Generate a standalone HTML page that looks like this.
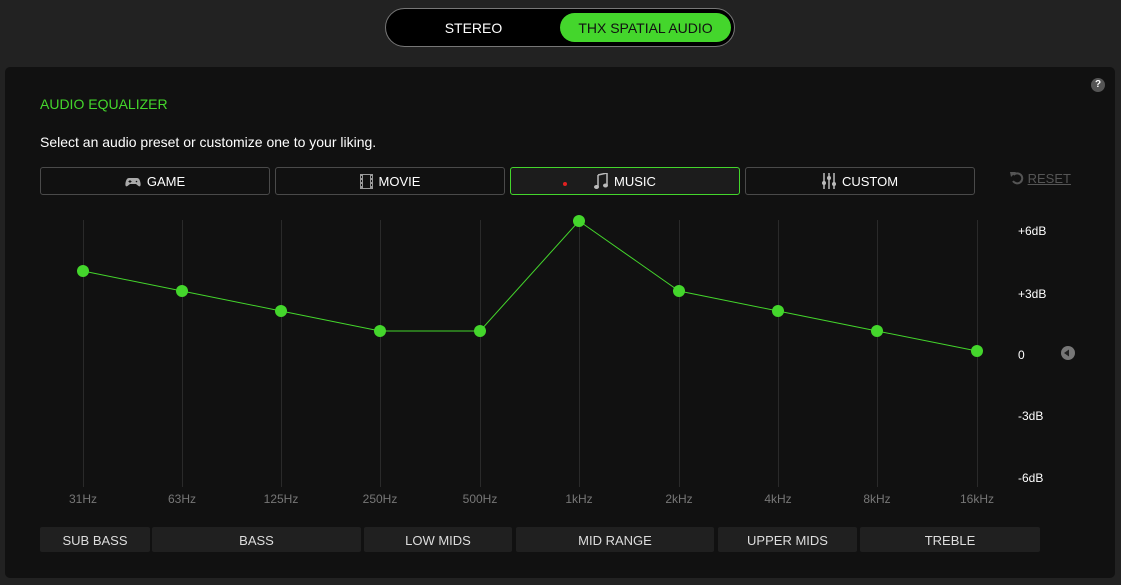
<!DOCTYPE html>
<html><head><style>
body{margin:0;width:1121px;height:585px;background:#222;font-family:"Liberation Sans",sans-serif;position:relative;overflow:hidden;color:#eee}
.a{position:absolute}
.tog{left:385px;top:8px;width:348px;height:37px;border:1px solid #777;border-radius:20px;background:#000}
.tog .s{left:0;width:175px;top:1px;line-height:37px;text-align:center;font-size:14px;color:#fff}
.tog .g{left:174px;top:4px;width:171px;height:29px;border-radius:15px;background:#44d62c;color:#111;text-align:center;line-height:31px;font-size:14px}
.panel{left:5px;top:67px;width:1110px;height:511px;background:#111;border-radius:5px}
.pb{top:167px;height:28px;border:1px solid #4a4a4a;border-radius:3px;box-sizing:border-box;width:230px;line-height:27px;text-align:center;font-size:13px;color:#fff}
.pb svg{vertical-align:-3px;margin-right:6px}
.band{top:527px;height:25px;background:#202020;border-radius:2px;text-align:center;line-height:27px;font-size:13px;color:#ddd}
.db{left:1018px;font-size:12px;color:#fff}
.hz{top:492px;font-size:12px;color:#777;width:60px;text-align:center}
</style></head><body>
<div class="a tog"><div class="a s">STEREO</div><div class="a g">THX SPATIAL AUDIO</div></div>
<div class="a panel"></div>
<div class="a" style="left:1091px;top:78px;width:14px;height:14px;border-radius:50%;background:#555;color:#fff;font-size:10px;font-weight:bold;text-align:center;line-height:14px">?</div>
<div class="a" style="left:40px;top:96px;font-size:14px;color:#44d62c">AUDIO EQUALIZER</div>
<div class="a" style="left:40px;top:134px;font-size:14px;color:#fff">Select an audio preset or customize one to your liking.</div>
<div class="a pb" style="left:40px"><svg width="16" height="14" viewBox="0 0 16 14"><path d="M4 3h8c2 0 3 2 3.5 5s-.5 4-2 3l-2.5-2h-6l-2.5 2c-1.5 1-2.5 0-2-3S2 3 4 3z" fill="#aaa"/><rect x="3.5" y="6" width="3" height="1" fill="#111"/><rect x="4.5" y="5" width="1" height="3" fill="#111"/><circle cx="11.5" cy="6.5" r=".8" fill="#111"/></svg>GAME</div>
<div class="a pb" style="left:275px"><svg width="13" height="15" viewBox="0 0 13 15"><rect x="0" y="0" width="13" height="15" fill="#999"/><rect x="3" y="1" width="7" height="13" fill="#111"/><g fill="#111"><rect x="1" y="2" width="1" height="2"/><rect x="1" y="6" width="1" height="2"/><rect x="1" y="10" width="1" height="2"/><rect x="11" y="2" width="1" height="2"/><rect x="11" y="6" width="1" height="2"/><rect x="11" y="10" width="1" height="2"/></g></svg>MOVIE</div>
<div class="a pb" style="left:510px;border-color:#44d62c;background:#1c1c1c"><span style="display:inline-block;width:4px;height:4px;border-radius:50%;background:#e02020;position:absolute;left:52px;top:14px"></span><svg width="14" height="16" viewBox="0 0 14 16"><path d="M4 2L13 0V12" stroke="#bbb" stroke-width="1.5" fill="none"/><path d="M4 2V14" stroke="#bbb" stroke-width="1.5"/><ellipse cx="2.5" cy="14" rx="2.5" ry="2" fill="#bbb"/><ellipse cx="11.5" cy="12.5" rx="2.5" ry="2" fill="#bbb"/></svg>MUSIC</div>
<div class="a pb" style="left:745px"><svg width="14" height="16" viewBox="0 0 14 16"><g stroke="#bbb" stroke-width="1.5"><line x1="2" y1="0" x2="2" y2="16"/><line x1="7" y1="0" x2="7" y2="16"/><line x1="12" y1="0" x2="12" y2="16"/></g><g fill="#bbb"><circle cx="2" cy="10" r="2"/><circle cx="7" cy="5" r="2"/><circle cx="12" cy="11" r="2"/></g></svg>CUSTOM</div>
<div class="a" style="left:1010px;top:171px;font-size:13px;color:#555"><svg width="14" height="14" viewBox="0 0 14 14" style="vertical-align:-2px"><path d="M3.5 4A5 5 0 1 1 3 10" stroke="#555" stroke-width="2" fill="none"/><path d="M0 1L6 1L1 6Z" fill="#555"/></svg> <span style="text-decoration:underline">RESET</span></div>
<svg class="a" style="left:0;top:0" width="1121" height="585">
<g stroke="#2a2a2a" stroke-width="1">
<line x1="83.5" y1="220" x2="83.5" y2="487"/><line x1="182.5" y1="220" x2="182.5" y2="487"/><line x1="281.5" y1="220" x2="281.5" y2="487"/><line x1="380.5" y1="220" x2="380.5" y2="487"/><line x1="480.5" y1="220" x2="480.5" y2="487"/><line x1="579.5" y1="220" x2="579.5" y2="487"/><line x1="679.5" y1="220" x2="679.5" y2="487"/><line x1="778.5" y1="220" x2="778.5" y2="487"/><line x1="877.5" y1="220" x2="877.5" y2="487"/><line x1="977.5" y1="220" x2="977.5" y2="487"/>
</g>
<polyline fill="none" stroke="#44d62c" stroke-width="1" points="83,271 182,291 281,311 380,331 480,331 579,221 679,291 778,311 877,331 977,351"/>
<g fill="#44d62c">
<circle cx="83" cy="271" r="6"/><circle cx="182" cy="291" r="6"/><circle cx="281" cy="311" r="6"/><circle cx="380" cy="331" r="6"/><circle cx="480" cy="331" r="6"/><circle cx="579" cy="221" r="6"/><circle cx="679" cy="291" r="6"/><circle cx="778" cy="311" r="6"/><circle cx="877" cy="331" r="6"/><circle cx="977" cy="351" r="6"/>
</g>
<circle cx="1068" cy="353" r="7" fill="#777"/><path d="M1064 353 L1069 349.5 L1069 356.5Z" fill="#222"/>
</svg>
<div class="a db" style="top:224px">+6dB</div>
<div class="a db" style="top:287px">+3dB</div>
<div class="a db" style="top:348px">0</div>
<div class="a db" style="top:409px">-3dB</div>
<div class="a db" style="top:471px">-6dB</div>
<div class="a hz" style="left:53px">31Hz</div><div class="a hz" style="left:152px">63Hz</div><div class="a hz" style="left:251px">125Hz</div><div class="a hz" style="left:350px">250Hz</div><div class="a hz" style="left:450px">500Hz</div><div class="a hz" style="left:549px">1kHz</div><div class="a hz" style="left:649px">2kHz</div><div class="a hz" style="left:748px">4kHz</div><div class="a hz" style="left:847px">8kHz</div><div class="a hz" style="left:947px">16kHz</div>
<div class="a band" style="left:40px;width:110px">SUB BASS</div>
<div class="a band" style="left:152px;width:209px">BASS</div>
<div class="a band" style="left:364px;width:148px">LOW MIDS</div>
<div class="a band" style="left:516px;width:198px">MID RANGE</div>
<div class="a band" style="left:718px;width:139px">UPPER MIDS</div>
<div class="a band" style="left:860px;width:180px">TREBLE</div>
</body></html>
